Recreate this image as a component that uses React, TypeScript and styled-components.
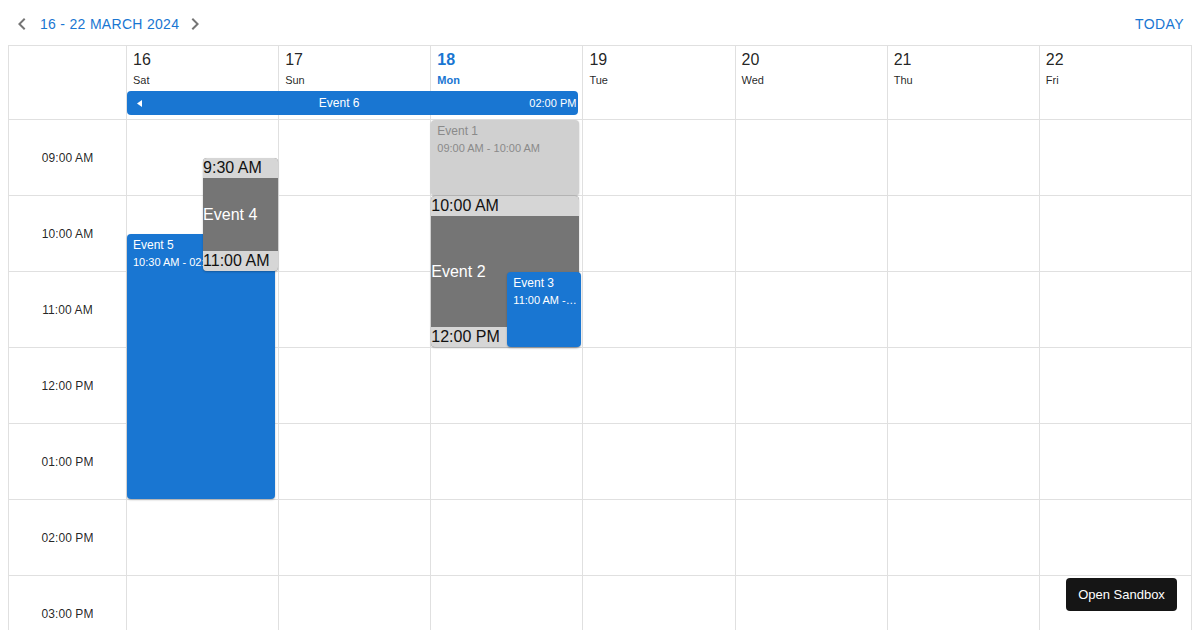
import React from "react";
import styled, { createGlobalStyle, css } from "styled-components";

const GlobalStyle = createGlobalStyle`
  html, body { margin: 0; padding: 0; overflow: hidden; background: #fff; }
  body { font-family: "Liberation Sans", Arial, sans-serif; color: rgba(0,0,0,0.87); }
  * { box-sizing: border-box; }
`;

const LINE = "#e0e0e0";
const BLUE = "#1976d2";
const HOUR = 76;

const Page = styled.div`
  padding: 0 8px;
`;

const Toolbar = styled.div`
  height: 45px;
  display: flex;
  align-items: center;
  justify-content: space-between;
`;

const NavGroup = styled.div`
  display: flex;
  align-items: center;
  padding-top: 2px;
`;

const IconBtn = styled.button<{ $side: "left" | "right" }>`
  width: 24px;
  height: 24px;
  padding: 0;
  border: 0;
  background: transparent;
  display: flex;
  align-items: center;
  justify-content: center;
  color: #757575;
  margin-left: ${(p) => (p.$side === "left" ? "2px" : "4px")};
  margin-right: ${(p) => (p.$side === "left" ? "6px" : "0")};
  svg { width: 24px; height: 24px; fill: currentColor; }
`;

const RangeLabel = styled.span`
  font-size: 14px;
  letter-spacing: 0.3px;
  color: ${BLUE};
  text-transform: uppercase;
`;

const TodayBtn = styled.button`
  border: 0;
  background: transparent;
  padding: 0;
  margin-right: 8px;
  margin-top: 2px;
  font-family: inherit;
  font-size: 14px;
  letter-spacing: 0.4px;
  color: ${BLUE};
  text-transform: uppercase;
`;

const Calendar = styled.div`
  border-top: 1px solid ${LINE};
  border-left: 1px solid ${LINE};
`;

const Header = styled.div`
  display: grid;
  grid-template-columns: 118px repeat(7, 1fr);
  grid-template-rows: 74px;
`;

const HeadCell = styled.div<{ $col: number }>`
  grid-row: 1;
  grid-column: ${(p) => p.$col};
  border-right: 1px solid ${LINE};
  border-bottom: 1px solid ${LINE};
  padding: 4px 6px 0;
`;

const DayNum = styled.div<{ $today?: boolean }>`
  font-size: 16px;
  line-height: 20px;
  color: ${(p) => (p.$today ? BLUE : "rgba(0,0,0,0.87)")};
  font-weight: ${(p) => (p.$today ? 700 : 400)};
`;

const DayName = styled.div<{ $today?: boolean }>`
  font-size: 11px;
  line-height: 13px;
  margin-top: 4px;
  color: ${(p) => (p.$today ? BLUE : "rgba(0,0,0,0.87)")};
  font-weight: ${(p) => (p.$today ? 700 : 400)};
`;

const AllDayEvent = styled.div`
  grid-row: 1;
  grid-column: 2 / 5;
  align-self: end;
  margin: 0 5px 5px 0;
  height: 24px;
  border-radius: 4px;
  background: ${BLUE};
  color: #fff;
  display: flex;
  align-items: center;
  padding: 0 2px 0 10px;
  position: relative;
  z-index: 1;
  svg { width: 5px; height: 7px; fill: #fff; margin-right: 7px; flex: none; }
`;

const AllDayTitle = styled.span`
  flex: 1;
  text-align: center;
  font-size: 12px;
`;

const AllDayTime = styled.span`
  font-size: 11px;
`;

const Body = styled.div`
  display: grid;
  grid-template-columns: 118px repeat(7, 1fr);
`;

const Column = styled.div`
  position: relative;
  display: flex;
  flex-direction: column;
`;

const TimeCell = styled.div`
  height: ${HOUR}px;
  border-right: 1px solid ${LINE};
  border-bottom: 1px solid ${LINE};
  display: flex;
  align-items: center;
  justify-content: center;
  font-size: 12px;
  letter-spacing: 0.1px;
`;

const Slot = styled.div`
  height: ${HOUR}px;
  border-right: 1px solid ${LINE};
  border-bottom: 1px solid ${LINE};
`;

const eventBase = css`
  position: absolute;
  border-radius: 4px;
  overflow: hidden;
  box-shadow: 0 1px 2px rgba(0, 0, 0, 0.25);
`;

const SimpleEvent = styled.div<{ $variant: "blue" | "grey" }>`
  ${eventBase}
  padding: 4px 2px 0 6px;
  background: ${(p) => (p.$variant === "blue" ? BLUE : "#d0d0d0")};
  color: ${(p) => (p.$variant === "blue" ? "#fff" : "#8a8a8a")};
`;

const EvTitle = styled.div`
  font-size: 12px;
  line-height: 14px;
  white-space: nowrap;
`;

const EvTime = styled.div`
  font-size: 11px;
  line-height: 14px;
  margin-top: 3px;
  white-space: nowrap;
  overflow: hidden;
  text-overflow: ellipsis;
`;

const BandEvent = styled.div`
  ${eventBase}
  display: flex;
  flex-direction: column;
  background: #757575;
`;

const Band = styled.div`
  height: 20px;
  flex: none;
  background: #d6d6d6;
  color: #111;
  font-size: 16px;
  line-height: 20px;
  white-space: nowrap;
`;

const BandMiddle = styled.div`
  flex: 1;
  display: flex;
  align-items: center;
  color: #fff;
  font-size: 16px;
  white-space: nowrap;
`;

const SandboxBtn = styled.button`
  position: fixed;
  right: 23px;
  bottom: 19px;
  width: 111px;
  height: 33px;
  border: 0;
  border-radius: 4px;
  background: #151515;
  color: #fff;
  font-family: inherit;
  font-size: 13px;
`;

type Ev =
  | { kind: "simple"; day: number; start: number; end: number; title: string; time: string; variant: "blue" | "grey"; left: string; width: string; z?: number }
  | { kind: "band"; day: number; start: number; end: number; title: string; from: string; to: string; left: string; width: string; z?: number };

const days = [
  { n: 16, d: "Sat" },
  { n: 17, d: "Sun" },
  { n: 18, d: "Mon", today: true },
  { n: 19, d: "Tue" },
  { n: 20, d: "Wed" },
  { n: 21, d: "Thu" },
  { n: 22, d: "Fri" },
];

const hours = ["09:00 AM", "10:00 AM", "11:00 AM", "12:00 PM", "01:00 PM", "02:00 PM", "03:00 PM", "04:00 PM", "05:00 PM"];

const events: Ev[] = [
  { kind: "simple", day: 0, start: 10.5, end: 14, title: "Event 5", time: "10:30 AM - 02:00 PM", variant: "blue", left: "0px", width: "calc(100% - 4px)", z: 1 },
  { kind: "band", day: 0, start: 9.5, end: 11, title: "Event 4", from: "9:30 AM", to: "11:00 AM", left: "50%", width: "calc(50% - 1px)", z: 2 },
  { kind: "simple", day: 2, start: 9, end: 10, title: "Event 1", time: "09:00 AM - 10:00 AM", variant: "grey", left: "0px", width: "calc(100% - 4px)", z: 1 },
  { kind: "band", day: 2, start: 10, end: 12, title: "Event 2", from: "10:00 AM", to: "12:00 PM", left: "0px", width: "calc(100% - 4px)", z: 1 },
  { kind: "simple", day: 2, start: 11, end: 12, title: "Event 3", time: "11:00 AM - 12:00 PM", variant: "blue", left: "50%", width: "calc(50% - 2px)", z: 2 },
];

const ChevronLeft = () => (
  <svg viewBox="0 0 24 24"><path d="M15.41 7.41 14 6l-6 6 6 6 1.41-1.41L10.83 12z" /></svg>
);
const ChevronRight = () => (
  <svg viewBox="0 0 24 24"><path d="M10 6 8.59 7.41 13.17 12l-4.58 4.59L10 18l6-6z" /></svg>
);

function EventView({ ev }: { ev: Ev }) {
  const style: React.CSSProperties = {
    top: (ev.start - 9) * HOUR,
    height: (ev.end - ev.start) * HOUR - 1,
    left: ev.left,
    width: ev.width,
    zIndex: ev.z,
  };
  if (ev.kind === "simple") {
    return (
      <SimpleEvent $variant={ev.variant} style={style}>
        <EvTitle>{ev.title}</EvTitle>
        <EvTime>{ev.time}</EvTime>
      </SimpleEvent>
    );
  }
  return (
    <BandEvent style={style}>
      <Band>{ev.from}</Band>
      <BandMiddle>{ev.title}</BandMiddle>
      <Band>{ev.to}</Band>
    </BandEvent>
  );
}

export default function App() {
  return (
    <Page>
      <GlobalStyle />
      <Toolbar>
        <NavGroup>
          <IconBtn $side="left" aria-label="previous"><ChevronLeft /></IconBtn>
          <RangeLabel>16 - 22 March 2024</RangeLabel>
          <IconBtn $side="right" aria-label="next"><ChevronRight /></IconBtn>
        </NavGroup>
        <TodayBtn>Today</TodayBtn>
      </Toolbar>
      <Calendar>
        <Header>
          <HeadCell $col={1} />
          {days.map((d, i) => (
            <HeadCell key={d.n} $col={i + 2}>
              <DayNum $today={d.today}>{d.n}</DayNum>
              <DayName $today={d.today}>{d.d}</DayName>
            </HeadCell>
          ))}
          <AllDayEvent>
            <svg viewBox="0 0 5 7"><path d="M5 0 L0 3.5 L5 7 Z" /></svg>
            <AllDayTitle>Event 6</AllDayTitle>
            <AllDayTime>02:00 PM</AllDayTime>
          </AllDayEvent>
        </Header>
        <Body>
          <Column>
            {hours.map((h) => (
              <TimeCell key={h}>{h}</TimeCell>
            ))}
          </Column>
          {days.map((d, i) => (
            <Column key={d.n}>
              {hours.map((h) => (
                <Slot key={h} />
              ))}
              {events.filter((e) => e.day === i).map((e) => (
                <EventView key={e.title} ev={e} />
              ))}
            </Column>
          ))}
        </Body>
      </Calendar>
      <SandboxBtn>Open Sandbox</SandboxBtn>
    </Page>
  );
}
